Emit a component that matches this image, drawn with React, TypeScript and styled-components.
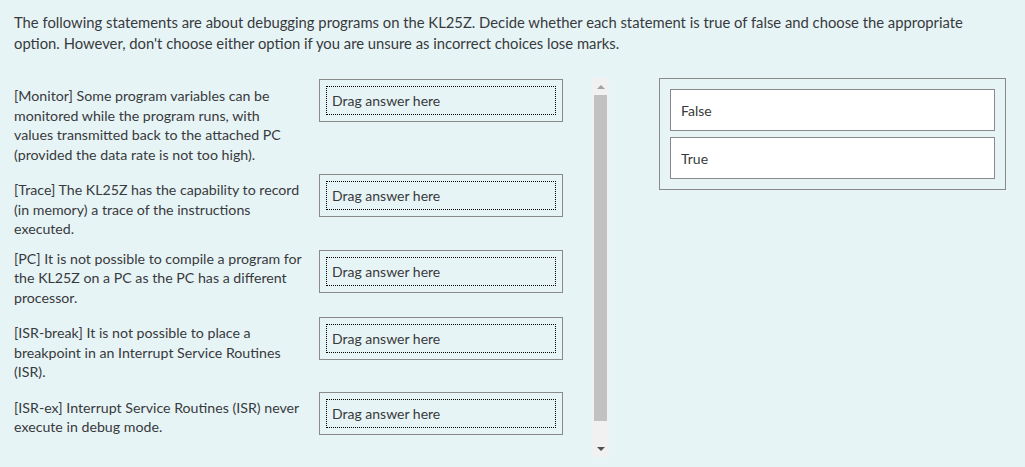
import React from "react";
import styled, { createGlobalStyle } from "styled-components";

const GlobalStyle = createGlobalStyle`
  html, body {
    margin: 0;
    padding: 0;
    background: #e7f4f6;
  }
  body {
    font-family: Lato, "Liberation Sans", sans-serif;
    color: #373a3c;
  }
  * { box-sizing: border-box; }
`;

const Page = styled.div`
  padding: 12px 14px 0 14px;
  width: 1025px;
  height: 467px;
  overflow: hidden;
`;

const Prompt = styled.p`
  margin: 0 0 24px 0;
  font-size: 14.8px;
  line-height: 21px;
  max-width: 980px;
`;

const Main = styled.div`
  display: flex;
  align-items: flex-start;
  gap: 50px;
`;

const ScrollArea = styled.div`
  display: flex;
  width: 595px;
  height: 379px;
`;

const Viewport = styled.div`
  flex: 1;
  overflow: hidden;
  padding-top: 1px;
`;

const Rows = styled.div`
  display: flex;
  flex-direction: column;
  gap: 10px;
  padding-bottom: 24px;
`;

const Row = styled.div`
  display: flex;
  align-items: flex-start;
  gap: 15px;
`;

const Stem = styled.div<{ $offset: number }>`
  width: 290px;
  margin-top: ${(p) => p.$offset}px;
  font-size: 14.2px;
  line-height: 19.5px;
  white-space: nowrap;
`;

const StemLine = styled.span`
  display: block;
`;

const DropBox = styled.div<{ $offset: number }>`
  width: 244px;
  height: 43px;
  margin-top: ${(p) => p.$offset}px;
  border: 1px solid #8a8a8a;
  padding: 6px;
  flex-shrink: 0;
`;

const DropInner = styled.div`
  height: 100%;
  border: 1px dotted #000;
  padding-left: 5px;
  display: flex;
  align-items: center;
  font-size: 14px;
`;

const Scrollbar = styled.div`
  width: 17px;
  height: 100%;
  background: #f1f1f1;
  display: flex;
  flex-direction: column;
  flex-shrink: 0;
`;

const ScrollButton = styled.div`
  height: 17px;
  display: flex;
  align-items: center;
  justify-content: center;
  flex-shrink: 0;
`;

const Arrow = styled.span<{ $dir: "up" | "down"; $color: string }>`
  width: 0;
  height: 0;
  border-left: 4px solid transparent;
  border-right: 4px solid transparent;
  ${(p) =>
    p.$dir === "up"
      ? `border-bottom: 4px solid ${p.$color};`
      : `border-top: 4px solid ${p.$color};`}
`;

const Track = styled.div`
  flex: 1;
  padding: 0 2px;
`;

const Thumb = styled.div`
  height: 326px;
  background: #c1c1c1;
`;

const ChoicesPanel = styled.div`
  width: 347px;
  border: 1px solid #8a8a8a;
  padding: 10px;
  display: flex;
  flex-direction: column;
  gap: 6px;
`;

const Choice = styled.div`
  height: 42px;
  background: #fff;
  border: 1px solid #8a8a8a;
  padding: 0 10px;
  display: flex;
  align-items: center;
  font-size: 14px;
`;

const statements = [
  {
    lines: [
      "[Monitor] Some program variables can be",
      "monitored while the program runs, with",
      "values transmitted back to the attached PC",
      "(provided the data rate is not too high).",
    ],
    stem: 7,
    box: 0,
  },
  {
    lines: [
      "[Trace] The KL25Z has the capability to record",
      "(in memory) a trace of the instructions",
      "executed.",
    ],
    stem: 6,
    box: 0,
  },
  {
    lines: [
      "[PC] It is not possible to compile a program for",
      "the KL25Z on a PC as the PC has a different",
      "processor.",
    ],
    stem: 0,
    box: 1,
  },
  {
    lines: [
      "[ISR-break] It is not possible to place a",
      "breakpoint in an Interrupt Service Routines",
      "(ISR).",
    ],
    stem: 6,
    box: 0,
  },
  {
    lines: ["[ISR-ex] Interrupt Service Routines (ISR) never", "execute in debug mode."],
    stem: 6,
    box: 0,
  },
];

export default function App() {
  return (
    <>
      <GlobalStyle />
      <Page>
        <Prompt>
          The following statements are about debugging programs on the KL25Z. Decide whether each
          statement is true of false and choose the appropriate option. However, don't choose either
          option if you are unsure as incorrect choices lose marks.
        </Prompt>
        <Main>
          <ScrollArea>
            <Viewport>
              <Rows>
                {statements.map((s, i) => (
                  <Row key={i}>
                    <Stem $offset={s.stem}>
                      {s.lines.map((l, j) => (
                        <StemLine key={j}>{l}</StemLine>
                      ))}
                    </Stem>
                    <DropBox $offset={s.box}>
                      <DropInner>Drag answer here</DropInner>
                    </DropBox>
                  </Row>
                ))}
              </Rows>
            </Viewport>
            <Scrollbar>
              <ScrollButton>
                <Arrow $dir="up" $color="#a3a3a3" />
              </ScrollButton>
              <Track>
                <Thumb />
              </Track>
              <ScrollButton>
                <Arrow $dir="down" $color="#505050" />
              </ScrollButton>
            </Scrollbar>
          </ScrollArea>
          <ChoicesPanel>
            <Choice>False</Choice>
            <Choice>True</Choice>
          </ChoicesPanel>
        </Main>
      </Page>
    </>
  );
}
